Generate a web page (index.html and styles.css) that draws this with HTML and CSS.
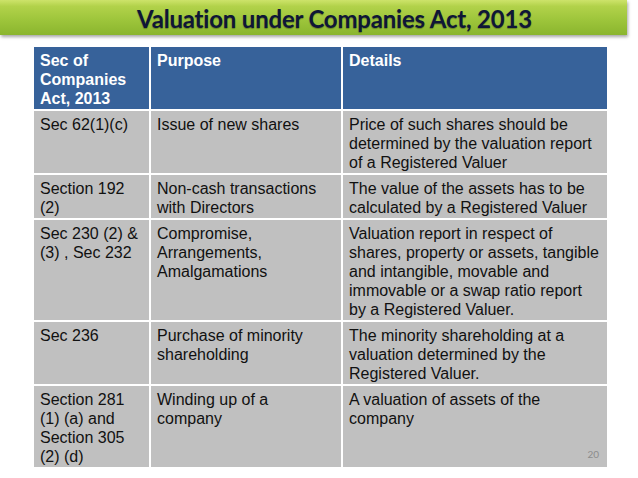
FILE: index.html
```html
<!DOCTYPE html>
<html>
<head>
<meta charset="utf-8">
<link rel="stylesheet" href="styles.css">
</head>
<body>
<div class="slide">
  <div class="banner"><h1 class="title">Valuation under Companies Act, 2013</h1></div>
  <div class="table-wrap">
    <table class="acts">
      <colgroup><col class="c1"><col class="c2"><col class="c3"></colgroup>
      <thead>
        <tr><th>Sec of Companies Act, 2013</th><th>Purpose</th><th>Details</th></tr>
      </thead>
      <tbody>
        <tr><td>Sec 62(1)(c)</td><td>Issue of new shares</td><td>Price of such shares should be determined by the valuation report of a Registered Valuer</td></tr>
        <tr><td>Section 192 (2)</td><td>Non-cash transactions with Directors</td><td>The value of the assets has to be calculated by a Registered Valuer</td></tr>
        <tr><td>Sec 230 (2) &amp; (3) , Sec 232</td><td>Compromise, Arrangements, Amalgamations</td><td>Valuation report in respect of shares, property or assets, tangible and intangible, movable and immovable or a swap ratio report by a Registered Valuer.</td></tr>
        <tr><td>Sec 236</td><td>Purchase of minority shareholding</td><td>The minority shareholding at a valuation determined by the Registered Valuer.</td></tr>
        <tr><td>Section 281 (1) (a) and Section 305 (2) (d)</td><td>Winding up of a company</td><td>A valuation of assets of the company</td></tr>
      </tbody>
    </table>
    <span class="page-num">20</span>
  </div>
</div>
</body>
</html>
```
FILE: styles.css
```css
html, body {
  margin: 0;
  padding: 0;
  background: #ffffff;
}
.slide {
  width: 638px;
  height: 478px;
  position: relative;
  overflow: hidden;
  font-family: "Liberation Sans", Arial, sans-serif;
}
.banner {
  width: 627px;
  height: 35px;
  background: linear-gradient(to bottom, #cde36a 0%, #b2d24a 18%, #9cc43a 60%, #8ab52e 100%);
  box-shadow: 1px 2px 3px rgba(0, 0, 0, 0.35);
  display: flex;
  align-items: center;
  justify-content: center;
}
.title {
  margin: 1px 0 0 42px;
  font-family: "Lato", "Open Sans", sans-serif;
  font-weight: 700;
  font-size: 24px;
  color: #0f1636;
  letter-spacing: -0.2px;
  text-shadow: 0 1px 1px rgba(0, 0, 0, 0.3);
}
.table-wrap {
  position: relative;
  margin: 12px 0 0 34px;
  width: 573px;
}
.acts {
  border-collapse: collapse;
  table-layout: fixed;
  width: 573px;
  font-size: 16px;
  line-height: 19px;
}
.c1 { width: 116px; }
.c2 { width: 192px; }
.c3 { width: 265px; }
.acts th, .acts td {
  text-align: left;
  vertical-align: top;
  padding: 4px 4px 1px 6px;
  border: 2px solid #ffffff;
}
.acts tr:first-child th { border-top: none; }
.acts tr th:first-child, .acts tr td:first-child { border-left: none; }
.acts tr th:last-child, .acts tr td:last-child { border-right: none; }
.acts tbody tr:last-child td { border-bottom: none; }
.acts th {
  background: #37629a;
  color: #ffffff;
  font-weight: 700;
}
.acts td {
  background: #c0c0c0;
  color: #111111;
}
.page-num {
  position: absolute;
  right: 8px;
  bottom: 7px;
  font-family: "Lato", sans-serif;
  font-size: 10px;
  color: #8c8c8c;
}
```
